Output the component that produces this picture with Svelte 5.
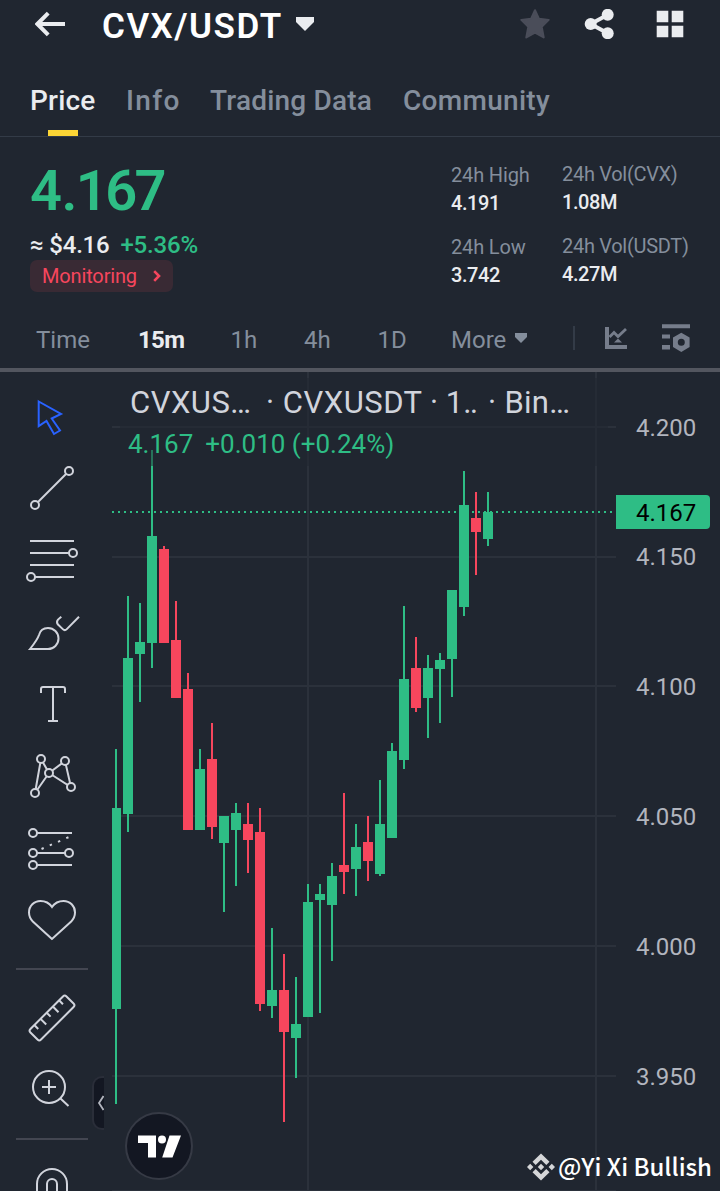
<script>
  const tabs = [
    { label: 'Price', active: true, width: 65, spacing: 0.2 },
    { label: 'Info', width: 53, spacing: 1.4 },
    { label: 'Trading Data', width: 162, spacing: 0.2 },
    { label: 'Community', width: 147, spacing: 0.3 }
  ];

  const stats = [
    [
      { label: '24h High', value: '4.191' },
      { label: '24h Low', value: '3.742' }
    ],
    [
      { label: '24h Vol(CVX)', value: '1.08M' },
      { label: '24h Vol(USDT)', value: '4.27M' }
    ]
  ];

  const intervals = ['Time', '15m', '1h', '4h', '1D'];
  let interval = '15m';

  const axisLabels = ['4.200', '4.150', '4.100', '4.050', '4.000', '3.950'];
  const gridRows = [426, 556, 685, 815, 945, 1075, 1190];
  const gridCols = [307, 595];

  // high, body top, body bottom, low, rising
  const candles = [
    [749, 808, 1009, 1104, 1],
    [596, 658, 814, 832, 1],
    [603, 642, 654, 702, 1],
    [450, 536, 643, 668, 1],
    [546, 549, 643, 643, 0],
    [601, 640, 698, 698, 0],
    [673, 689, 830, 830, 0],
    [749, 769, 830, 830, 1],
    [723, 759, 827, 839, 0],
    [816, 816, 843, 912, 1],
    [803, 813, 830, 886, 1],
    [803, 824, 840, 873, 0],
    [808, 832, 1004, 1011, 0],
    [928, 990, 1006, 1018, 1],
    [954, 990, 1032, 1122, 0],
    [977, 1024, 1038, 1078, 1],
    [884, 902, 1017, 1017, 1],
    [884, 894, 900, 1013, 1],
    [863, 876, 905, 961, 1],
    [793, 865, 872, 894, 0],
    [824, 847, 869, 896, 1],
    [816, 842, 861, 881, 0],
    [780, 824, 874, 876, 1],
    [743, 751, 838, 838, 1],
    [606, 679, 760, 769, 1],
    [637, 668, 708, 712, 0],
    [655, 668, 698, 738, 1],
    [653, 660, 669, 723, 1],
    [590, 590, 659, 697, 1],
    [471, 505, 607, 616, 1],
    [492, 518, 532, 575, 0],
    [492, 512, 539, 546, 1]
  ].map(([high, top, bottom, low, up], i) => ({ x: 116 + i * 12, high, top, bottom, low, up }));
</script>

<div class="screen">
  <header>
    <svg class="back" width="30" height="26" viewBox="35 11 30 26">
      <path d="M65 24H38M48.2 13.2L37.4 24l10.8 10.8" fill="none" stroke="#eaecef" stroke-width="4" />
    </svg>
    <h1>CVX/USDT</h1>
    <svg class="caret" width="18" height="14" viewBox="0 0 18 14">
      <path d="M0 0h18v5l-9 9-9-9z" fill="#eaecef" />
    </svg>
    <div class="actions">
      <svg width="30" height="30" viewBox="0 0 30 30">
        <path
          d="M15 1.2l4 8.6 9.7 1.1-7 6.9 2 10.7L15 23.6l-8.7 4.9 2-10.7-7-6.9 9.7-1.1z"
          fill="#4a4d59"
          stroke="#4a4d59"
          stroke-width="2"
          stroke-linejoin="round"
        />
      </svg>
      <svg width="30" height="30" viewBox="0 0 30 30">
        <path d="M23.7 5.7L6.7 15l17 9.3" fill="none" stroke="#eaecef" stroke-width="4" />
        <circle cx="6.7" cy="15" r="6" fill="#eaecef" />
        <circle cx="23.7" cy="5.8" r="6" fill="#eaecef" />
        <circle cx="23.7" cy="24.2" r="6" fill="#eaecef" />
      </svg>
      <svg width="28" height="28" viewBox="0 0 28 28">
        <path d="M.7.7h11.6v11.6H.7zM15.7.7h11.6v11.6H15.7zM.7 15.7h11.6v11.6H.7zM15.7 15.7h11.6v11.6H15.7z" fill="#eaecef" />
      </svg>
    </div>
  </header>

  <nav>
    {#each tabs as tab}
      <span class="tab" class:active={tab.active} style="width: {tab.width}px; letter-spacing: {tab.spacing}px">
        {tab.label}
      </span>
    {/each}
  </nav>

  <section class="summary">
    <div class="quote">
      <div class="last">4<i>.</i>167</div>
      <div class="fiat">
        <span class="usd">≈ $4.16</span>
        <span class="change">+5.36%</span>
      </div>
      <div class="chip">
        <span>Monitoring</span>
        <svg width="8" height="12" viewBox="0 0 8 12">
          <path d="M1.2 1.2L6 6l-4.8 4.8" fill="none" stroke="#f6465d" stroke-width="2.6" />
        </svg>
      </div>
    </div>
    {#each stats as column}
      <div class="stats">
        {#each column as stat}
          <div class="stat">
            <div class="stat-label">{stat.label}</div>
            <div class="stat-value">{stat.value}</div>
          </div>
        {/each}
      </div>
    {/each}
  </section>

  <div class="intervals">
    {#each intervals as item}
      <span class="interval" class:selected={item === interval}>{item}</span>
    {/each}
    <span class="interval more">More</span>
    <svg class="more-caret" width="12" height="10" viewBox="0 0 12 10">
      <path d="M0 0h12v4l-6 6-6-6z" fill="#848e9c" />
    </svg>
    <i class="divider"></i>
    <svg class="indicator" width="22" height="22" viewBox="0 0 22 22">
      <path d="M2 0v20h20" fill="none" stroke="#767d8b" stroke-width="4" />
      <path d="M4.5 10L9 5.5l4 4L21 2" fill="none" stroke="#767d8b" stroke-width="2.8" />
      <path d="M9 15.5l4-4 4 4z" fill="#767d8b" />
    </svg>
    <svg class="settings" width="28" height="30" viewBox="0 0 28 30">
      <path d="M0 .3h28v4H0zM0 10.6h8v4H0zM0 21h8v4.5H0z" fill="#767d8b" />
      <path
        d="M19.3 8.7l8.3 4.8v9.6l-8.3 4.8-8.3-4.8v-9.6zM19.3 14.8a3.5 3.5 0 1 0 0 7 3.5 3.5 0 0 0 0-7z"
        fill="#767d8b"
        fill-rule="evenodd"
      />
    </svg>
  </div>

  <main>
    <aside>
      <svg class="tool cursor" viewBox="0 0 72 72">
        <path d="M22.7 21.5L45 34l-9.3 4.5L44 50.5 38 54l-7.5-13-7.8 5.2z" />
      </svg>
      <svg class="tool" viewBox="0 0 72 72">
        <path d="M22 50l28-28" />
        <circle cx="53" cy="19" r="4" />
        <circle cx="19" cy="53" r="4" />
      </svg>
      <svg class="tool" viewBox="0 0 72 72">
        <path d="M14 17h44M14 29h39M14 41h44M19 53h39" />
        <circle cx="57" cy="29" r="4" />
        <circle cx="15" cy="53" r="4" />
      </svg>
      <svg class="tool" viewBox="0 0 72 72">
        <path d="M14 53h18a10.5 10.5 0 1 0 0-21c-5 0-8 3-9 7-1.5 4.5-5 9-9 14z" />
        <path d="M45.3 20.7L42 23.6q-2 2.4 0 5l4.8 4.5q2 2 4 0L63 20.7" />
      </svg>
      <svg class="tool" viewBox="0 0 72 72">
        <path d="M25 25v-4q0-2 2-2h20q2 0 2 2v4M37 19v34M32 53h10" />
      </svg>
      <svg class="tool" viewBox="0 0 72 72">
        <path d="M25 19l8 14 16-12 6 26-22-14-14 20z" />
        <circle cx="25" cy="19" r="4" />
        <circle cx="49" cy="21" r="4" />
        <circle cx="33" cy="33" r="4" />
        <circle cx="19" cy="53" r="4" />
        <circle cx="55" cy="47" r="4" />
      </svg>
      <svg class="tool" viewBox="0 0 72 72">
        <path d="M21 21h35M21 41h28M21 53h35" />
        <path d="M25.5 37L53 25" stroke-dasharray="2.4 6.6" />
        <circle cx="17" cy="21" r="4" />
        <circle cx="17" cy="41" r="4" />
        <circle cx="53" cy="41" r="4" />
        <circle cx="17" cy="53" r="4" />
      </svg>
      <svg class="tool" viewBox="0 0 72 72">
        <path d="M36 55L16.8 37.5C14 34.5 13 31.5 13 28.5 13 22 18 17 24.5 17c5 0 9 2.3 11.5 6 2.5-3.7 6.5-6 11.5-6C54 17 59 22 59 28.5c0 3-1 6-3.8 9z" />
      </svg>
      <hr />
      <svg class="tool" viewBox="0 0 72 72">
        <g transform="translate(36 36) rotate(-45)">
          <rect x="-25.5" y="-7.5" width="51" height="15" rx="2.5" />
          <path d="M-17.5-7.5v5.5M-8.7-7.5v8M0-7.5v5.5M8.7-7.5v8M17.5-7.5v5.5" />
        </g>
      </svg>
      <svg class="tool" viewBox="0 0 72 72">
        <circle cx="33" cy="33" r="16" />
        <path d="M26 33h14M33 26v14M44.5 44.5l8 7.5" />
      </svg>
      <hr />
      <svg class="tool" viewBox="0 0 72 72">
        <path d="M21 50V32a15 15 0 0 1 30 0v18M31 50V32a5 5 0 0 1 10 0v18" />
      </svg>
      <div class="collapse">
        <svg width="7" height="16" viewBox="0 0 7 16">
          <path d="M6.5 1L2 8l4.5 7" fill="none" stroke="#b2b5be" stroke-width="1.8" />
        </svg>
      </div>
    </aside>

    <div class="pane">
      <svg class="plot" width="504" height="819" viewBox="112 372 504 819" shape-rendering="crispEdges">
        {#each gridRows as y}
          <rect x="112" {y} width="504" height="2" fill="#2b313b" />
        {/each}
        {#each gridCols as x}
          <rect {x} y="372" width="2" height="819" fill="#2b313b" />
        {/each}
        <path d="M112 512H616" stroke="#2ebd85" stroke-width="2" stroke-dasharray="2 4" />
        {#each candles as c}
          <g fill={c.up ? '#2ebd85' : '#f6465d'}>
            <rect x={c.x - 1} y={c.high} width="2" height={c.low - c.high} />
            <rect x={c.x - 5} y={c.top} width="10" height={c.bottom - c.top} />
          </g>
        {/each}
      </svg>
      <div class="legend">
        <div class="symbol">
          <span class="name">CVXUS…</span><span class="pair">· CVXUSDT</span><span class="res">· 1‥</span><span class="exchange">· Bin…</span>
        </div>
        <div class="delta"><span>4.167</span><span>+0.010 (+0.24%)</span></div>
      </div>
      <div class="logo">
        <svg width="44" height="24" viewBox="137 1134 44 24">
          <path d="M138 1135.5h18v22h-8v-14.5h-10zM169.5 1135.5H181l-8.5 22h-10.3z" fill="#fff" />
          <circle cx="162" cy="1139.5" r="4" fill="#fff" />
        </svg>
      </div>
    </div>

    <div class="axis">
      {#each axisLabels as label}
        <span>{label}</span>
      {/each}
      <b>4.167</b>
    </div>

    <div class="watermark">
      <svg width="28" height="28" viewBox="0 0 28 28" fill="#d5d6d8">
        <path d="M14 .5l8.5 8.3-3.2 3.2L14 6.8 8.7 12 5.5 8.8zM14 27.5l8.5-8.3-3.2-3.2-5.3 5.2L8.700 16l-3.200 3.200zM14 10.800l3.200 3.200-3.200 3.200-3.200-3.200zM3.200 10.800L6.400 14l-3.200 3.200L0 14zM24.800 10.800L28 14l-3.200 3.200-3.200-3.200z" />
      </svg>
      <span>@Yi Xi Bullish</span>
    </div>
  </main>
</div>

<style>
  :global(body) {
    background: #202630;
  }

  .screen {
    width: 720px;
    height: 1191px;
    overflow: hidden;
    display: flex;
    flex-direction: column;
    background: #202630;
    color: #eaecef;
    font-family: Roboto, "Liberation Sans", sans-serif;
  }

  svg {
    display: block;
    flex: none;
  }

  header {
    height: 48px;
    display: flex;
    align-items: center;
    padding: 0 36px 0 35px;
  }

  h1 {
    margin: 5px 0 0 37px;
    width: 180px;
    font-size: 35px;
    line-height: 43px;
    font-weight: 600;
    letter-spacing: 1.5px;
    color: #fff;
  }

  .caret {
    margin-left: 14px;
  }

  .actions {
    display: flex;
    align-items: center;
    margin-left: auto;
    gap: 34px;
  }

  .actions svg:last-child {
    margin-left: 8px;
  }

  nav {
    height: 88px;
    display: flex;
    gap: 31px;
    padding-left: 30px;
    border-bottom: 1px solid #333b47;
  }

  .tab {
    display: flex;
    flex-direction: column;
    justify-content: space-between;
    padding-top: 36px;
    font-size: 28px;
    line-height: 33px;
    font-weight: 500;
    color: #848e9c;
    white-space: nowrap;
  }

  .tab.active {
    color: #eaecef;
  }

  .tab.active::after {
    content: "";
    width: 30px;
    height: 6px;
    margin-left: 18px;
    background: #fcd535;
  }

  .summary {
    height: 171px;
    box-sizing: border-box;
    display: flex;
    padding: 24px 0 0 30px;
  }

  .quote {
    width: 421px;
  }

  .last {
    height: 69px;
    font-size: 56px;
    line-height: 61px;
    font-weight: 600;
    letter-spacing: -2.6px;
    color: #2ebd85;
  }

  .last i {
    font-style: normal;
    margin: 0 1px 0 2px;
  }

  .fiat {
    display: flex;
    gap: 11px;
    font-size: 24px;
    line-height: 30px;
    font-weight: 500;
    letter-spacing: -0.2px;
  }

  .change {
    color: #2ebd85;
  }

  .chip {
    width: 143px;
    height: 32px;
    box-sizing: border-box;
    display: flex;
    align-items: center;
    justify-content: space-between;
    padding: 0 12px;
    border-radius: 7px;
    background: #392a34;
    color: #f6465d;
    font-size: 20px;
    letter-spacing: -0.15px;
  }

  .stats {
    width: 111px;
    display: flex;
    flex-direction: column;
    gap: 16px;
    font-size: 20px;
    line-height: 28px;
    white-space: nowrap;
  }

  .stats:last-child {
    margin-top: -1px;
  }

  .stat-label {
    color: #848e9c;
    letter-spacing: -0.15px;
  }

  .stats:last-child .stat-label {
    letter-spacing: -0.3px;
  }

  .stat-value {
    font-weight: 500;
    letter-spacing: -0.4px;
  }

  .intervals {
    height: 60px;
    display: flex;
    align-items: center;
    padding-left: 36px;
    font-size: 24px;
    color: #848e9c;
    border-bottom: 4px solid #53565f;
  }

  .interval {
    width: 73.5px;
    margin-top: 3px;
  }

  .interval:first-child {
    width: 102px;
  }

  .interval:nth-child(2) {
    width: 92.5px;
    letter-spacing: -0.7px;
  }

  .selected {
    color: #eaecef;
    font-weight: 700;
  }

  .interval.more {
    width: 64px;
  }

  .divider {
    width: 2px;
    height: 24px;
    margin: 0 30px 0 46px;
    background: #333b47;
  }

  .indicator {
    margin-right: 35px;
  }

  .settings {
    margin-top: 2px;
  }

  main {
    height: 819px;
    display: flex;
    position: relative;
  }

  aside {
    width: 112px;
    height: 819px;
    box-sizing: border-box;
    padding: 8px 24px 0 16px;
    overflow: hidden;
    position: relative;
  }

  .tool {
    width: 72px;
    height: 72px;
    fill: none;
    stroke: #d1d4dc;
    stroke-width: 2;
  }

  .tool circle {
    fill: #202630;
  }

  .cursor {
    stroke: #2962ff;
  }

  hr {
    height: 2px;
    margin: 12px 0;
    border: 0;
    background: #434651;
  }

  .collapse {
    position: absolute;
    left: 92px;
    top: 704px;
    width: 12px;
    height: 54px;
    box-sizing: border-box;
    display: flex;
    align-items: center;
    justify-content: flex-end;
    border: 2px solid #2a2e39;
    border-right: 0;
    border-radius: 10px 0 0 10px;
    background: #131722;
  }

  .pane {
    width: 504px;
    position: relative;
  }

  .legend {
    position: absolute;
    left: 8px;
    top: 6px;
    width: 488px;
    height: 88px;
    background: rgba(32, 38, 48, 0.5);
    white-space: nowrap;
  }

  .symbol {
    padding-left: 10px;
    margin-top: 5px;
    display: flex;
    font-size: 31px;
    line-height: 40px;
    color: #d1d4dc;
  }

  .name {
    width: 136px;
    letter-spacing: 0.5px;
  }

  .pair {
    width: 164px;
    letter-spacing: 0.5px;
  }

  .res {
    width: 58px;
  }

  .exchange {
    letter-spacing: 0.3px;
  }

  .delta {
    display: flex;
    gap: 12px;
    padding-left: 8px;
    font-size: 26px;
    line-height: 43px;
    color: #2ebd85;
  }

  .logo {
    position: absolute;
    left: 13px;
    top: 740px;
    width: 68px;
    height: 68px;
    box-sizing: border-box;
    display: flex;
    align-items: center;
    justify-content: center;
    border: 2px solid #363a45;
    border-radius: 50%;
    background: #131722;
  }

  .axis {
    width: 104px;
    box-sizing: border-box;
    display: flex;
    flex-direction: column;
    gap: 99.8px;
    padding: 40.7px 0 0 20px;
    position: relative;
    font-size: 24px;
    line-height: 30px;
    color: #b2b5be;
  }

  .axis b {
    position: absolute;
    left: 0;
    top: 123px;
    width: 94px;
    height: 34px;
    box-sizing: border-box;
    padding-left: 20px;
    border-radius: 0 4px 4px 0;
    line-height: 37px;
    font-weight: 400;
    background: #2ebd85;
    color: #000;
  }

  .watermark {
    position: absolute;
    right: 8px;
    bottom: 7px;
    display: flex;
    align-items: center;
    gap: 3px;
    font-family: "Noto Sans CJK SC", sans-serif;
    font-size: 24px;
    line-height: 36px;
    font-weight: 500;
    color: #fff;
    white-space: nowrap;
  }

  .watermark svg {
    margin-top: 1px;
  }
</style>
